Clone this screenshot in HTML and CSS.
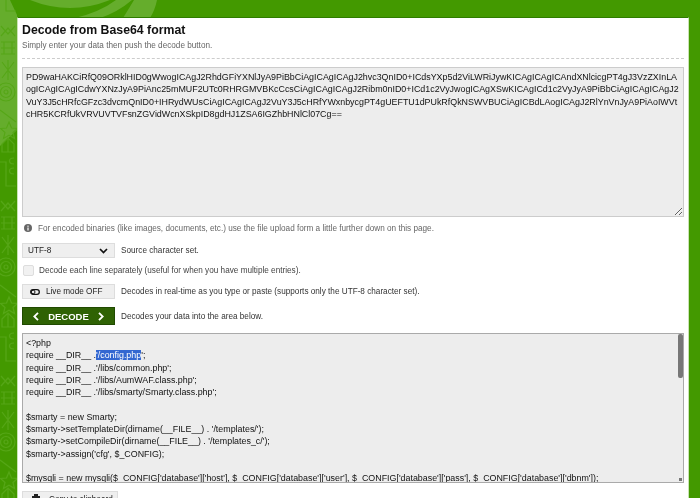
FILE: index.html
```html
<!DOCTYPE html>
<html lang="en">
<head>
<meta charset="utf-8">
<title>Decode from Base64 format</title>
<link rel="stylesheet" href="styles.css">
</head>
<body>
<svg class="backdrop" width="700" height="498" viewBox="0 0 700 498" aria-hidden="true">
  <defs>
    <pattern id="strip" x="0" y="22" width="17" height="175" patternUnits="userSpaceOnUse">
      <g fill="none" stroke="#55a616" stroke-width="1.200">
        <path d="M1 4 L8 12 L15 4 M1 14 L8 6 L15 14"/>
        <path d="M1 20H15M1 26H15M1 32H15M4 20V32M12 20V32"/>
        <path d="M2 40L14 56M14 40L2 56M8 38V58"/>
        <circle cx="6" cy="70" r="9"/><circle cx="6" cy="70" r="5.500"/><circle cx="6" cy="70" r="2"/>
        <path d="M0 88L16 100"/>
        <path d="M9 100l2.500 6 6 .5-4.500 4 1.500 6-5.500-3.300-5.500 3.300 1.500-6-4.500-4 6-.5z"/>
        <path d="M2 122l6-6 6 6v8H2zM8 116v14"/>
        <path d="M14 136c-6 0-6 6 0 6M14 146c-6 0-6 6 0 6M0 140h6v24h10"/>
      </g>
    </pattern>
  </defs>
  <path class="backdrop-light" d="M0 0H10L17 15V130L0 146Z"/>
  <rect x="0" y="0" width="17" height="498" fill="url(#strip)"/>
  <path class="backdrop-light" d="M30 0Q70 16 110 0Z"/>
  <path class="backdrop-light" d="M75 18Q100 12 116 0H132Q118 12 100 18Z"/>
  <path class="backdrop-light" d="M123 18Q128 10 134 0H157Q155 10 150 18Z"/>
</svg>
<main class="card">
  <h1 class="title">Decode from Base64 format</h1>
  <p class="subtitle">Simply enter your data then push the decode button.</p>
  <hr class="rule">
  <textarea class="field field-input" readonly wrap="off">PD9waHAKCiRfQ09ORklHID0gWwogICAgJ2RhdGFiYXNlJyA9PiBbCiAgICAgICAgJ2hvc3QnID0+ICdsYXp5d2ViLWRiJywKICAgICAgICAndXNlcicgPT4gJ3VzZXInLA
ogICAgICAgICdwYXNzJyA9PiAnc25mMUF2UTc0RHRGMVBKcCcsCiAgICAgICAgJ2Ribm0nID0+ICd1c2VyJwogICAgXSwKICAgICd1c2VyJyA9PiBbCiAgICAgICAgJ2
VuY3J5cHRfcGFzc3dvcmQnID0+IHRydWUsCiAgICAgICAgJ2VuY3J5cHRfYWxnbycgPT4gUEFTU1dPUkRfQkNSWVBUCiAgICBdLAogICAgJ2RlYnVnJyA9PiAoIWVt
cHR5KCRfUkVRVUVTVFsnZGVidWcnXSkpID8gdHJ1ZSA6IGZhbHNlCl07Cg==</textarea>
  <p class="note">
    <svg class="note-icon" width="8" height="8" viewBox="0 0 16 16" aria-hidden="true"><circle cx="8" cy="8" r="8" fill="#666"/><rect x="6.800" y="7" width="2.400" height="6" fill="#fff"/><rect x="6.800" y="3.200" width="2.400" height="2.400" fill="#fff"/></svg>
    <span>For encoded binaries (like images, documents, etc.) use the file upload form a little further down on this page.</span>
  </p>
  <div class="option option-select">
    <div class="control select">
      <span>UTF-8</span>
      <svg width="9" height="6" viewBox="0 0 9 6" aria-hidden="true"><path d="M1 1l3.500 3.500L8 1" fill="none" stroke="#111" stroke-width="1.700"/></svg>
    </div>
    <span class="hint">Source character set.</span>
  </div>
  <label class="option option-check">
    <span class="checkbox"></span>
    <span class="hint hint-muted">Decode each line separately (useful for when you have multiple entries).</span>
  </label>
  <div class="option option-live">
    <div class="control live">
      <svg width="10" height="6" viewBox="0 0 10 6" aria-hidden="true"><rect x=".7" y=".7" width="8.600" height="4.600" rx="2.300" fill="none" stroke="#111" stroke-width="1.300"/><circle cx="3.200" cy="3" r="1.800" fill="none" stroke="#111" stroke-width="1"/></svg>
      <span>Live mode OFF</span>
    </div>
    <span class="hint">Decodes in real-time as you type or paste (supports only the UTF-8 character set).</span>
  </div>
  <div class="option option-decode">
    <button class="decode" type="button">
      <svg width="6" height="9" viewBox="0 0 6 9" aria-hidden="true"><path d="M5 .8L1.300 4.500 5 8.200" fill="none" stroke="#fff" stroke-width="1.800"/></svg>
      <span>DECODE</span>
      <svg width="6" height="9" viewBox="0 0 6 9" aria-hidden="true"><path d="M1 .8l3.700 3.700L1 8.200" fill="none" stroke="#fff" stroke-width="1.800"/></svg>
    </button>
    <span class="hint">Decodes your data into the area below.</span>
  </div>
  <div class="field field-output">
    <pre class="code">&lt;?php
require __DIR__ .<mark class="picked">'/config.php</mark>';
require __DIR__ .'/libs/common.php';
require __DIR__ .'/libs/AumWAF.class.php';
require __DIR__ .'/libs/smarty/Smarty.class.php';

$smarty = new Smarty;
$smarty-&gt;setTemplateDir(dirname(__FILE__) . '/templates/');
$smarty-&gt;setCompileDir(dirname(__FILE__) . '/templates_c/');
$smarty-&gt;assign('cfg', $_CONFIG);

$mysqli = new mysqli($_CONFIG['database']['host'], $_CONFIG['database']['user'], $_CONFIG['database']['pass'], $_CONFIG['database']['dbnm']);</pre>
    <span class="thumb"></span>
    <span class="corner"></span>
  </div>
  <button class="copy" type="button">
    <svg width="10" height="11" viewBox="0 0 10 11" aria-hidden="true"><path d="M1 2h8v9H1z" fill="#222"/><path d="M3 0h4v3H3z" fill="#222"/></svg>
    <span>Copy to clipboard</span>
  </button>
</main>
</body>
</html>
```
FILE: styles.css
```css
* { box-sizing: border-box; }
html, body { margin: 0; height: 498px; overflow: hidden; }
body {
  position: relative;
  background: #439900;
  padding: 17px 11px 0 17px;
  font-family: "Liberation Sans", Arial, sans-serif;
  color: #222;
}
.backdrop { position: absolute; left: 0; top: 0; }
.backdrop-light { fill: #65ad2c; }
.card {
  position: relative;
  height: 520px;
  background: #fff;
  border: 1px solid #c9e3b3;
  border-top-color: #2f7c00;
  padding: 0 4px;
  display: flex;
  flex-direction: column;
  align-items: flex-start;
  filter: blur(.2px);
}
.title { margin: 4px 0 0; font-size: 12.300px; line-height: 16px; font-weight: 700; color: #111; }
.subtitle { margin: 0; font-size: 8.200px; line-height: 15px; color: #666; }
.rule { width: 100%; margin: 5px 0 8px; border: 0; border-top: 1px dashed #ccc; height: 0; }
.field {
  display: block;
  width: 100%;
  height: 150px;
  margin: 0;
  background: #ededed;
  border: 1px solid #ccc;
  color: #111;
  font: 8.900px/12.300px "Liberation Sans", Arial, sans-serif;
}
.field-input { padding: 3px; resize: vertical; overflow: hidden; white-space: pre; outline: none; flex: none; }
.note { display: flex; align-items: center; gap: 6px; margin: 5px 0 0 2px; height: 12px; font-size: 8.200px; color: #666; }
.note-icon { flex: none; }
.option { display: flex; align-items: center; gap: 6px; }
.option-select { margin-top: 9px; }
.hint { font-size: 8.200px; color: #333; white-space: nowrap; }
.hint-muted { color: #444; }
.control {
  width: 93px;
  height: 15px;
  background: #efefef;
  border: 1px solid #ddd;
  font-size: 8.200px;
  display: flex;
  align-items: center;
  color: #222;
}
.select { justify-content: space-between; padding: 0 6px 0 5px; }
.option-check { margin-top: 7px; gap: 5px; height: 11px; }
.checkbox { width: 11px; height: 11px; background: #f1f1f1; border: 1px solid #ddd; border-radius: 2px; margin-left: 1px; flex: none; }
.option-live { margin-top: 8px; }
.live { gap: 6px; padding-left: 7px; }
.option-decode { margin-top: 8px; }
.decode {
  width: 93px;
  height: 18px;
  margin: 0;
  padding: 0 10px;
  display: flex;
  align-items: center;
  justify-content: space-between;
  background: #2f6204;
  border: 1px solid #204a00;
  color: #fff;
  font: 700 9.500px "Liberation Sans", Arial, sans-serif;
}
.field-output { position: relative; margin-top: 8px; border-color: #aaa; flex: none; overflow: hidden; }
.code { margin: 0; padding: 3px; font: inherit; white-space: pre; color: #111; }
.picked { background: #3367d1; color: #fff; }
.thumb { position: absolute; right: 0; top: 0; width: 5px; height: 44px; background: #777; border-radius: 2px; }
.corner { position: absolute; right: 1px; bottom: 1px; width: 3px; height: 3px; background: #777; }
.copy {
  display: flex;
  align-items: center;
  gap: 8px;
  width: 96px;
  height: 17px;
  margin: 8px 0 0;
  padding: 0 0 0 8px;
  background: #efefef;
  border: 1px solid #ddd;
  font: 8.200px "Liberation Sans", Arial, sans-serif;
  color: #222;
  white-space: nowrap;
  flex: none;
}
```
